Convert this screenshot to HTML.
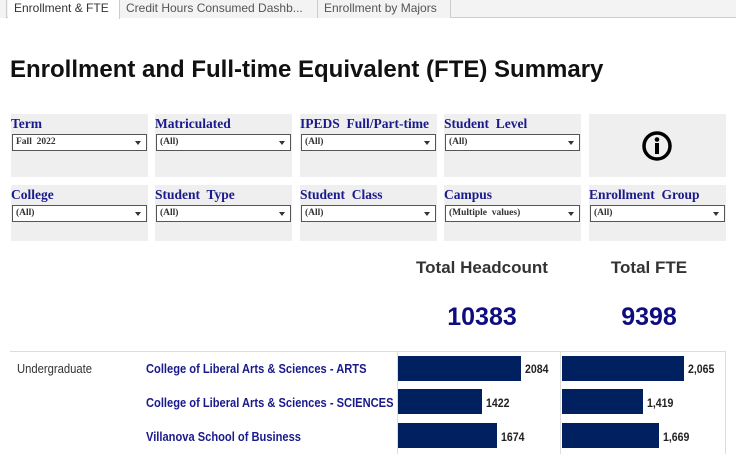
<!DOCTYPE html>
<html><head><meta charset="utf-8"><style>
*{margin:0;padding:0;box-sizing:border-box}
body{width:736px;height:454px;background:#fff;position:relative;overflow:hidden;font-family:"Liberation Sans",sans-serif}
.a{position:absolute}
.tabbar{left:0;top:0;width:736px;height:18px;border-bottom:1px solid #ccc;background:#f3f3f3}
.tab{top:0;height:18px;font-size:12px;color:#555;line-height:17px;padding:0 6px;border-right:1px solid #ccc;background:#f3f3f3;white-space:nowrap}
.f{background:#efefef}
.lb{font-family:"Liberation Serif",serif;font-weight:bold;color:#1a1a8c;font-size:13.5px}
.dd{background:#fff;border:1px solid #555;height:17px;font-family:"Liberation Serif",serif;font-weight:bold;font-size:9.5px;color:#333;line-height:15px;padding-left:3px}
.dd:after{content:"";position:absolute;right:5px;top:6px;border-left:3px solid transparent;border-right:3px solid transparent;border-top:4px solid #333}
.bar{background:#002060}
.n{font-weight:bold;font-size:12px;color:#222;transform:scaleX(0.88);transform-origin:left;white-space:nowrap}
.c{font-weight:bold;font-size:12.5px;color:#1a1a8c;transform:scaleX(0.89);transform-origin:left;white-space:nowrap}
</style></head><body>
<div class="a tabbar"></div>
<div class="a tab" style="left:0;width:7px;padding:0"></div>
<div class="a tab" style="left:8px;width:112px;background:#fff;height:19px;color:#333;">Enrollment &amp; FTE</div>
<div class="a tab" style="left:120px;width:198px">Credit Hours Consumed Dashb...</div>
<div class="a tab" style="left:318px;width:133px">Enrollment by Majors</div>
<div class="a" style="left:10px;top:56px;font-size:24px;font-weight:bold;color:#111">Enrollment and Full-time Equivalent (FTE) Summary</div>

<div class="a f" style="left:11px;top:114px;width:137px;height:63px"></div>
<div class="a f" style="left:155px;top:114px;width:137px;height:63px"></div>
<div class="a f" style="left:300px;top:114px;width:137px;height:63px"></div>
<div class="a f" style="left:444px;top:114px;width:137px;height:63px"></div>
<div class="a f" style="left:589px;top:114px;width:137px;height:63px"></div>
<div class="a f" style="left:11px;top:185px;width:137px;height:56px"></div>
<div class="a f" style="left:155px;top:185px;width:137px;height:56px"></div>
<div class="a f" style="left:300px;top:185px;width:137px;height:56px"></div>
<div class="a f" style="left:444px;top:185px;width:137px;height:56px"></div>
<div class="a f" style="left:589px;top:185px;width:137px;height:56px"></div>

<div class="a lb" style="left:11px;top:116px">Term</div>
<div class="a lb" style="left:155px;top:116px">Matriculated</div>
<div class="a lb" style="left:300px;top:116px">IPEDS&nbsp; Full/Part-time</div>
<div class="a lb" style="left:444px;top:116px">Student&nbsp; Level</div>
<div class="a lb" style="left:11px;top:187px">College</div>
<div class="a lb" style="left:155px;top:187px">Student&nbsp; Type</div>
<div class="a lb" style="left:300px;top:187px">Student&nbsp; Class</div>
<div class="a lb" style="left:444px;top:187px">Campus</div>
<div class="a lb" style="left:589px;top:187px">Enrollment&nbsp; Group</div>

<div class="a dd" style="left:12px;top:134px;width:135px">Fall&nbsp; 2022</div>
<div class="a dd" style="left:156px;top:134px;width:135px">(All)</div>
<div class="a dd" style="left:301px;top:134px;width:135px">(All)</div>
<div class="a dd" style="left:445px;top:134px;width:135px">(All)</div>
<div class="a dd" style="left:12px;top:205px;width:135px">(All)</div>
<div class="a dd" style="left:156px;top:205px;width:135px">(All)</div>
<div class="a dd" style="left:301px;top:205px;width:135px">(All)</div>
<div class="a dd" style="left:445px;top:205px;width:135px">(Multiple&nbsp; values)</div>
<div class="a dd" style="left:590px;top:205px;width:135px">(All)</div>

<svg class="a" style="left:641px;top:130px" width="32" height="32" viewBox="0 0 32 32">
<circle cx="16" cy="16" r="13" fill="none" stroke="#000" stroke-width="3.5"/>
<circle cx="16" cy="9.5" r="2.3" fill="#000"/>
<rect x="14" y="13" width="4" height="11" fill="#000"/>
</svg>

<div class="a" style="left:398px;top:258px;width:168px;text-align:center;font-size:17px;font-weight:bold;color:#333">Total Headcount</div>
<div class="a" style="left:566px;top:258px;width:166px;text-align:center;font-size:17px;font-weight:bold;color:#333">Total FTE</div>
<div class="a" style="left:398px;top:303px;width:168px;text-align:center;font-size:25px;font-weight:bold;color:#0d0d80">10383</div>
<div class="a" style="left:566px;top:303px;width:166px;text-align:center;font-size:25px;font-weight:bold;color:#0d0d80">9398</div>

<div class="a" style="left:10px;top:351px;width:716px;height:1px;background:#ddd"></div>
<div class="a" style="left:397px;top:352px;width:1px;height:102px;background:#ddd"></div>
<div class="a" style="left:560px;top:352px;width:1px;height:102px;background:#ddd"></div>
<div class="a" style="left:725px;top:352px;width:1px;height:102px;background:#ddd"></div>

<div class="a" style="left:17px;top:362px;font-size:12.5px;color:#333;transform:scaleX(0.9);transform-origin:left">Undergraduate</div>
<div class="a c" style="left:146px;top:362px">College of Liberal Arts &amp; Sciences - ARTS</div>
<div class="a c" style="left:146px;top:396px">College of Liberal Arts &amp; Sciences - SCIENCES</div>
<div class="a c" style="left:146px;top:430px">Villanova School of Business</div>

<div class="a bar" style="left:398px;top:356px;width:123px;height:25px"></div>
<div class="a bar" style="left:398px;top:389px;width:84px;height:25px"></div>
<div class="a bar" style="left:398px;top:423px;width:99px;height:25px"></div>
<div class="a bar" style="left:562px;top:356px;width:122px;height:25px"></div>
<div class="a bar" style="left:562px;top:389px;width:81px;height:25px"></div>
<div class="a bar" style="left:562px;top:423px;width:97px;height:25px"></div>

<div class="a n" style="left:525px;top:362px">2084</div>
<div class="a n" style="left:486px;top:396px">1422</div>
<div class="a n" style="left:501px;top:430px">1674</div>
<div class="a n" style="left:688px;top:362px">2,065</div>
<div class="a n" style="left:647px;top:396px">1,419</div>
<div class="a n" style="left:663px;top:430px">1,669</div>
</body></html>
